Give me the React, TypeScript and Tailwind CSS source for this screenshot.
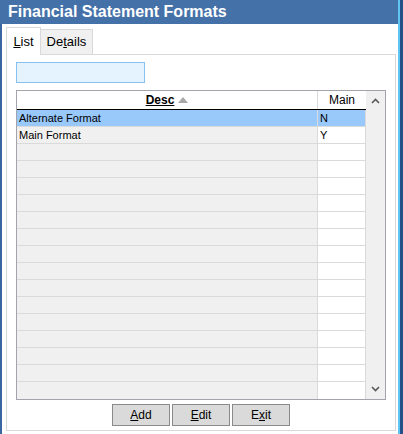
import React from "react";

const rows = [
  { desc: "Alternate Format", main: "N", selected: true },
  { desc: "Main Format", main: "Y", selected: false },
  ...Array.from({ length: 15 }, () => ({ desc: "", main: "", selected: false })),
];

const buttons = [
  { pre: "", key: "A", post: "dd" },
  { pre: "", key: "E", post: "dit" },
  { pre: "E", key: "x", post: "it" },
];

const Chevron = ({ up }: { up?: boolean }) => (
  <svg width="9" height="6" viewBox="0 0 9 6">
    <path
      d={up ? "M1 5 L4.5 1.5 L8 5" : "M1 1 L4.5 4.5 L8 1"}
      fill="none"
      stroke="#5a5a5a"
      strokeWidth="1.6"
    />
  </svg>
);

export default function App() {
  return (
    <div className="flex w-[403px] h-[434px] bg-white font-['Liberation_Sans',Arial,sans-serif] text-black overflow-hidden">
      <div className="flex flex-col w-[398px]">
        {/* title */}
        <div className="h-[24px] bg-[#4571a9] flex items-center pl-[8px] text-white font-bold text-[16px] leading-none">
          Financial Statement Formats
        </div>

        <div className="flex-1 border-l-2 border-[#3a66a2] pl-[4px] pr-[2px] pt-[3px]">
          {/* tabs */}
          <div className="flex items-end h-[27px]">
            <div className="relative z-10 h-[28px] -mb-px w-[35px] bg-white border-t border-l border-r border-[#d9d9d9] flex items-center justify-center text-[13px]">
              <span>
                <span className="underline">L</span>ist
              </span>
            </div>
            <div className="h-[25px] w-[52px] bg-[#f0f0f0] border-t border-r border-[#d9d9d9] flex items-center justify-center text-[13px]">
              <span>
                De<span className="underline">t</span>ails
              </span>
            </div>
          </div>

          {/* panel */}
          <div className="border border-[#d9d9d9] bg-white pl-[9px] pt-[7px] pb-[4px]">
            <div className="w-[129px] h-[21px] bg-[#e5f3fe] border border-[#86c1ef]" />

            {/* grid */}
            <div className="mt-[7px] w-[370px] border border-[#a3a3ad] flex">
              <div className="w-[349px] flex flex-col">
                <div className="flex h-[19px] border-b border-black bg-white">
                  <div className="w-[301px] border-r border-[#dadada] flex items-center justify-center gap-[4px]">
                    <span className="text-[12px] font-bold underline leading-none">Desc</span>
                    <svg width="10" height="6" viewBox="0 0 10 6">
                      <path d="M0 6 L5 0 L10 6 Z" fill="#a8a8a8" />
                    </svg>
                  </div>
                  <div className="w-[48px] flex items-center justify-center text-[12px] leading-none">
                    Main
                  </div>
                </div>
                {rows.map((r, i) => (
                  <div
                    key={i}
                    className={`flex h-[17px] text-[11px] leading-none ${
                      i < rows.length - 1 ? "border-b border-[#dadada]" : ""
                    }`}
                  >
                    <div
                      className={`w-[301px] border-r border-[#dadada] flex items-center pl-[2px] ${
                        r.selected ? "bg-[#99c9fb]" : "bg-[#f0f0f0]"
                      }`}
                    >
                      {r.desc}
                    </div>
                    <div
                      className={`w-[48px] border-r border-[#dadada] flex items-center pl-[2px] ${
                        r.selected ? "bg-[#99c9fb]" : "bg-white"
                      }`}
                    >
                      {r.main}
                    </div>
                  </div>
                ))}
              </div>
              <div className="w-[19px] bg-[#f0f0f0] flex flex-col justify-between items-center py-[7px]">
                <Chevron up />
                <Chevron />
              </div>
            </div>

            {/* buttons */}
            <div className="mt-[4px] w-[370px] flex justify-center gap-[2px]">
              {buttons.map((b, i) => (
                <button
                  key={i}
                  className="w-[58px] h-[22px] bg-[#dadada] border border-[#8a8a8a] text-[12px] leading-none flex items-center justify-center"
                >
                  <span>
                    {b.pre}
                    <span className="underline">{b.key}</span>
                    {b.post}
                  </span>
                </button>
              ))}
            </div>
          </div>
        </div>
      </div>
      <div className="w-[2px] bg-[#5fc6f3]" />
      <div className="w-[3px] bg-[#234f8a]" />
    </div>
  );
}
